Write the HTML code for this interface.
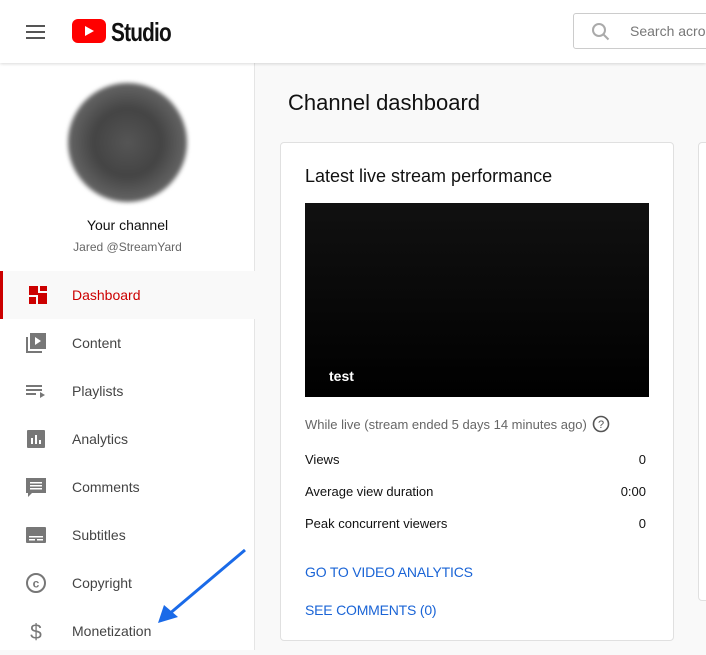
<!DOCTYPE html>
<html><head><style>
*{margin:0;padding:0;box-sizing:border-box}
body{width:706px;height:650px;overflow:hidden;font-family:"Liberation Sans",sans-serif;background:#f9f9f9;position:relative}
.hdr{position:absolute;left:0;top:0;width:706px;height:63px;background:#fff;box-shadow:0 1px 3px rgba(0,0,0,.15);z-index:2;overflow:hidden}
.side{position:absolute;left:0;top:63px;width:255px;height:587px;background:#fff;border-right:1px solid #e5e5e5}
.nav{position:absolute;left:0;width:255px;height:48px;font-size:14px;color:#444}
.nav span{position:absolute;left:72px;top:16px}
.nav svg{position:absolute;left:24px;top:12px}
.card{position:absolute;background:#fff;border:1px solid #e0e0e0;border-radius:4px}
.row{position:absolute;left:305px;width:341px;font-size:13px;color:#111}
.row b{position:absolute;right:0;font-weight:normal}
.lnk{position:absolute;left:305px;font-size:14px;color:#1a64d6;letter-spacing:-.2px}
</style></head><body>
<div class="hdr">
<svg style="position:absolute;left:26px;top:24px" width="20" height="16"><rect y="1" width="19" height="2" fill="#555"/><rect y="7" width="19" height="2" fill="#555"/><rect y="13" width="19" height="2" fill="#555"/></svg>
<svg style="position:absolute;left:72px;top:19px" width="35" height="24"><rect width="34" height="24" rx="6" fill="#f00"/><path d="M13 7l9 5-9 5z" fill="#fff"/></svg>
<div style="position:absolute;left:111px;top:17px;font-size:26px;font-weight:bold;letter-spacing:-1px;transform:scaleX(.8);transform-origin:left;color:#111">Studio</div>
<div style="position:absolute;left:573px;top:13px;width:150px;height:36px;border:1px solid #ccc;border-radius:3px"></div>
<svg style="position:absolute;left:591px;top:22px" width="20" height="20"><circle cx="8" cy="8" r="6" stroke="#aaa" stroke-width="2" fill="none"/><path d="M12.5 12.5l5 5" stroke="#aaa" stroke-width="2"/></svg>
<div style="position:absolute;left:630px;top:23px;font-size:14px;color:#777;white-space:nowrap">Search across</div>
</div>
<div class="side">
<div style="position:absolute;left:68px;top:20px;width:119px;height:119px;border-radius:50%;background:radial-gradient(circle at 50% 50%,#555 0%,#444 40%,#6a6a6a 75%,#bbb 100%);filter:blur(2px)"></div>
<div style="position:absolute;left:0;width:255px;top:154px;text-align:center;font-size:14px;color:#111">Your channel</div>
<div style="position:absolute;left:0;width:255px;top:177px;text-align:center;font-size:12px;color:#666">Jared @StreamYard</div>
</div>
<div class="nav" style="top:271px;background:#f9f9f9;border-left:3px solid #cc0000"><svg style="left:23px" width="24" height="24"><path d="M3 3h9v9H3zM14 3h7v5h-7zM3 14h7v7H3zM12 10h9v11h-9z" fill="#cc0000"/></svg><span style="left:69px;color:#cc0000">Dashboard</span></div>
<div class="nav" style="top:319px"><svg width="24" height="24"><path d="M2 6h2v14h14v2H2z M6 2h16v16H6z" fill="#777"/><path d="M11 6v8l6-4z" fill="#fff"/></svg><span>Content</span></div>
<div class="nav" style="top:367px"><svg width="24" height="24"><path d="M2 6h16v2H2zM2 10h16v2H2zM2 14h10v2H2zM16 13l5 3-5 3z" fill="#777"/></svg><span>Playlists</span></div>
<div class="nav" style="top:415px"><svg width="24" height="24"><rect x="3" y="3" width="18" height="18" rx="1" fill="#777"/><path d="M7 11h2v6H7zM11 8h2v9h-2zM15 13h2v4h-2z" fill="#fff"/></svg><span>Analytics</span></div>
<div class="nav" style="top:463px"><svg width="24" height="24"><path d="M2 3h20v15H8l-4 4V18H2z" fill="#777"/><path d="M6 7h12v1.5H6zM6 10h12v1.5H6zM6 13h12v1.5H6z" fill="#fff"/></svg><span>Comments</span></div>
<div class="nav" style="top:511px"><svg width="24" height="24"><rect x="2" y="4" width="20" height="16" rx="1" fill="#777"/><path d="M5 13h14v1.5H5zM5 16h6v1.5H5zM13 16h6v1.5h-6z" fill="#fff"/></svg><span>Subtitles</span></div>
<div class="nav" style="top:559px"><svg width="24" height="24"><circle cx="12" cy="12" r="9" stroke="#777" stroke-width="2" fill="none"/><text x="12" y="16.5" text-anchor="middle" font-size="12" font-weight="bold" fill="#777" font-family="Liberation Sans">c</text></svg><span>Copyright</span></div>
<div class="nav" style="top:607px"><svg width="24" height="24"><text x="12" y="20" text-anchor="middle" font-size="21" fill="#777" font-family="Liberation Sans">$</text></svg><span>Monetization</span></div>
<svg style="position:absolute;left:150px;top:545px" width="100" height="85"><path d="M95 5L18 70" stroke="#1a6ae8" stroke-width="3"/><path d="M8 78L14 60L28 72z" fill="#1a6ae8"/></svg>
<div style="position:absolute;left:288px;top:90px;font-size:22px;color:#111">Channel dashboard</div>
<div class="card" style="left:280px;top:142px;width:394px;height:499px"></div>
<div class="card" style="left:698px;top:142px;width:20px;height:459px"></div>
<div style="position:absolute;left:305px;top:166px;font-size:18px;color:#111">Latest live stream performance</div>
<div style="position:absolute;left:305px;top:203px;width:344px;height:194px;background:linear-gradient(#111,#000)"></div>
<div style="position:absolute;left:329px;top:368px;font-size:14px;font-weight:bold;color:#fff">test</div>
<div class="row" style="top:417px;color:#666">While live (stream ended 5 days 14 minutes ago)</div>
<svg style="position:absolute;left:592px;top:415px" width="18" height="18"><circle cx="9" cy="9" r="7.5" stroke="#555" stroke-width="1.6" fill="none"/><text x="9" y="13" text-anchor="middle" font-size="11" fill="#555" font-family="Liberation Sans">?</text></svg>
<div class="row" style="top:452px">Views<b>0</b></div>
<div class="row" style="top:484px">Average view duration<b>0:00</b></div>
<div class="row" style="top:516px">Peak concurrent viewers<b>0</b></div>
<div class="lnk" style="top:564px">GO TO VIDEO ANALYTICS</div>
<div class="lnk" style="top:602px">SEE COMMENTS (0)</div>
</body></html>
